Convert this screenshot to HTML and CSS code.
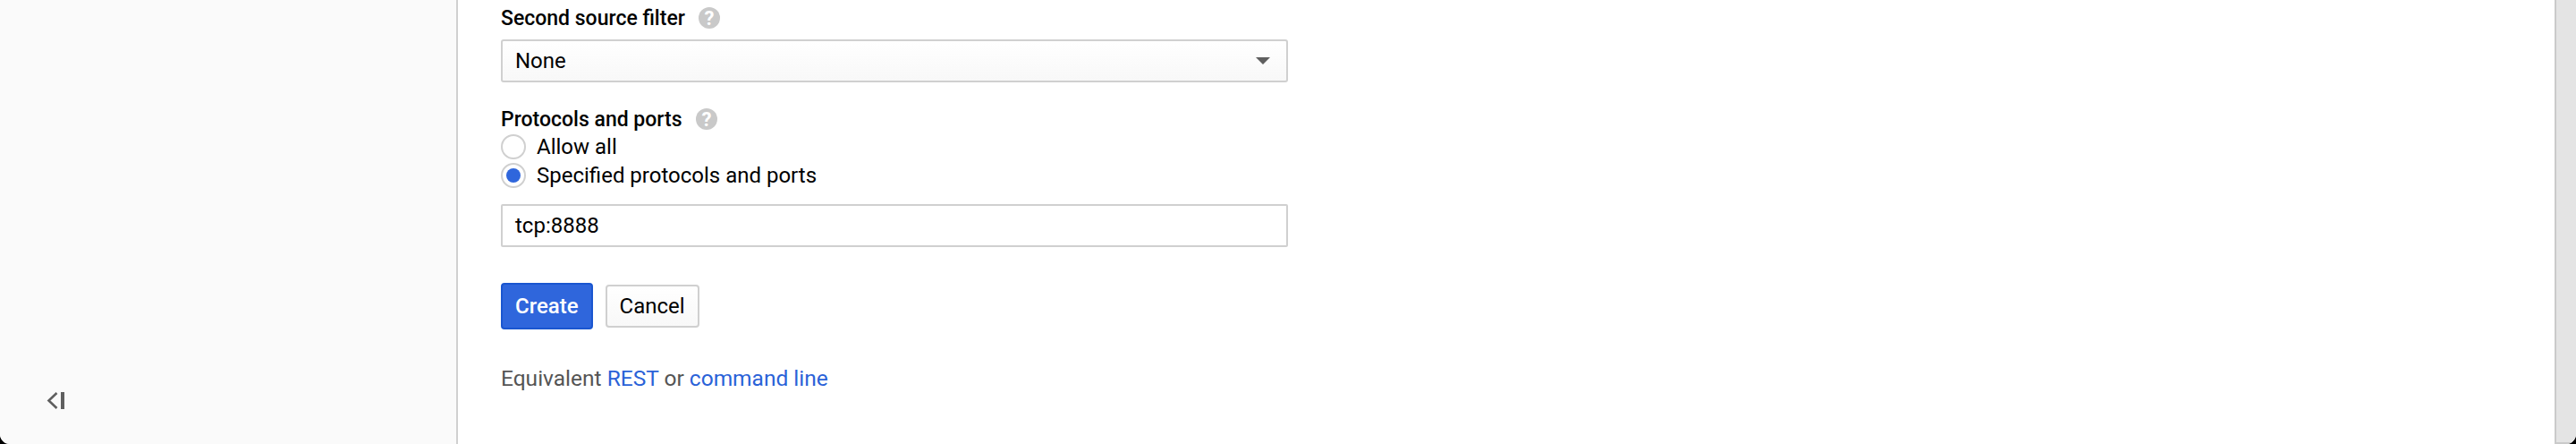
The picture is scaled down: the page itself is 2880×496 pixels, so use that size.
FILE: index.html
```html
<!DOCTYPE html>
<html lang="en">
<head>
<meta charset="utf-8">
<title>Create firewall rule</title>
<link rel="stylesheet" href="styles.css">
</head>
<body>
<div class="window">
  <aside class="sidebar">
    <button class="collapse" aria-label="Collapse">
      <svg width="24" height="24" viewBox="0 0 24 24"><path d="M13.5 3 L4.5 11.5 L13.5 20" fill="none" stroke="#5f5f5f" stroke-width="2.6"/><rect x="18" y="2" width="4" height="19" fill="#5f5f5f"/></svg>
    </button>
  </aside>
  <main class="content">
    <form class="form">
      <div class="label-row">
        <span class="label">Second source filter</span>
        <svg class="help" viewBox="0 0 24 24"><circle cx="12" cy="12" r="12" fill="#c9c9c9"/><text x="12" y="19.5" text-anchor="middle" class="help-q">?</text></svg>
      </div>
      <div class="select"><span>None</span><span class="arrow"></span></div>
      <div class="label-row second">
        <span class="label">Protocols and ports</span>
        <svg class="help" viewBox="0 0 24 24"><circle cx="12" cy="12" r="12" fill="#c9c9c9"/><text x="12" y="19.5" text-anchor="middle" class="help-q">?</text></svg>
      </div>
      <div class="radio-row"><span class="radio"></span><span>Allow all</span></div>
      <div class="radio-row"><span class="radio on"><span class="dot"></span></span><span>Specified protocols and ports</span></div>
      <div class="input">tcp:8888</div>
      <div class="buttons">
        <span class="btn primary">Create</span>
        <span class="btn">Cancel</span>
      </div>
      <p class="equiv">Equivalent <a>REST</a> or <a>command line</a></p>
    </form>
  </main>
  <div class="scrollbar"></div>
</div>
</body>
</html>
```

FILE: styles.css
```css
* { box-sizing: border-box; }
html, body { margin: 0; padding: 0; background: #000; }
body { width: 2880px; height: 496px; overflow: hidden; font-family: Roboto, "Liberation Sans", sans-serif; font-size: 24px; color: #000; }
.window { display: flex; width: 2880px; height: 496px; background: #fff; border-radius: 0 0 11px 11px; overflow: hidden; }
.sidebar { flex: 0 0 512px; background: #fafafa; border-right: 2px solid #d0d0d0; display: flex; flex-direction: column; justify-content: flex-end; padding: 0 0 36px 50px; }
.collapse { width: 24px; height: 24px; padding: 0; border: 0; background: none; display: block; }
.content { flex: 1; padding: 0 0 0 48px; }
.form { width: 880px; display: flex; flex-direction: column; align-items: stretch; }
.label-row { display: flex; align-items: center; height: 44px; padding-bottom: 4px; gap: 15px; }
.label-row.second { margin-top: 26px; height: 30px; padding: 0; }
.label { font-weight: 500; font-size: 23px; }
.help { width: 24px; height: 24px; }
.help-q { font: 700 22px Roboto, sans-serif; fill: #fff; }
.select { height: 48px; border: 2px solid #d0d0d0; border-radius: 3px; background: linear-gradient(#fff, #f8f8f8); display: flex; align-items: center; justify-content: space-between; padding: 0 18px 0 14px; }
.arrow { width: 0; height: 0; border-left: 8px solid transparent; border-right: 8px solid transparent; border-top: 8px solid #5f5f5f; }
.radio-row { display: flex; align-items: center; gap: 12px; height: 32px; }
.radio { width: 28px; height: 28px; border: 2px solid #d0d0d0; border-radius: 50%; background: #fff; display: flex; align-items: center; justify-content: center; }
.dot { width: 16px; height: 16px; border-radius: 50%; background: #2f66dc; }
.input { height: 48px; margin-top: 16px; border: 2px solid #d0d0d0; border-radius: 2px; display: flex; align-items: center; padding: 0 14px; }
.buttons { display: flex; align-items: center; gap: 14px; margin-top: 40px; }
.btn { height: 48px; display: flex; align-items: center; padding: 0 14px; border: 2px solid #d0d0d0; border-radius: 4px; background: linear-gradient(#fff, #f8f8f8); }
.btn.primary { height: 52px; font-weight: 500; color: #fff; background: #2f66dc; border-color: #1a56d0; }
.equiv { margin: 37px 0 0; line-height: 36px; font-size: 24.5px; color: #555; }
.equiv a { color: #2a62d8; }
.scrollbar { flex: 0 0 24px; background: #e4e4e4; border-left: 2px solid #cacaca; border-bottom: 2px solid #cacaca; }
```
